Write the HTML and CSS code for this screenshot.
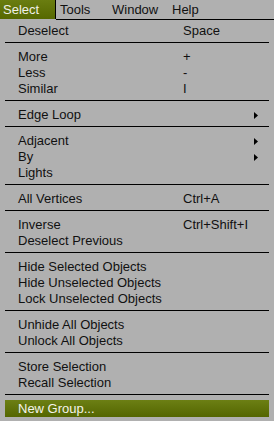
FILE: index.html
```html
<!DOCTYPE html>
<html>
<head>
<meta charset="utf-8">
<link rel="stylesheet" href="styles.css">
</head>
<body>
<div class="menubar">
  <div class="mb-active">Select</div>
  <div class="mb-rest">
    <span class="mb-tools">Tools</span>
    <span class="mb-window">Window</span>
    <span class="mb-help">Help</span>
  </div>
</div>
<div class="menu">
  <div class="item"><span>Deselect</span><span>Space</span></div>
  <div class="sep"></div>
  <div class="item"><span>More</span><span>+</span></div>
  <div class="item"><span>Less</span><span>-</span></div>
  <div class="item"><span>Similar</span><span>I</span></div>
  <div class="sep"></div>
  <div class="item"><span>Edge Loop</span><span></span><svg class="arrow" width="4" height="7" viewBox="0 0 4 7"><polygon points="0,0 4,3.5 0,7" fill="#000"/></svg></div>
  <div class="sep"></div>
  <div class="item"><span>Adjacent</span><span></span><svg class="arrow" width="4" height="7" viewBox="0 0 4 7"><polygon points="0,0 4,3.5 0,7" fill="#000"/></svg></div>
  <div class="item"><span>By</span><span></span><svg class="arrow" width="4" height="7" viewBox="0 0 4 7"><polygon points="0,0 4,3.5 0,7" fill="#000"/></svg></div>
  <div class="item"><span>Lights</span><span></span></div>
  <div class="sep"></div>
  <div class="item"><span>All Vertices</span><span>Ctrl+A</span></div>
  <div class="sep"></div>
  <div class="item"><span>Inverse</span><span>Ctrl+Shift+I</span></div>
  <div class="item"><span>Deselect Previous</span><span></span></div>
  <div class="sep"></div>
  <div class="item"><span>Hide Selected Objects</span><span></span></div>
  <div class="item"><span>Hide Unselected Objects</span><span></span></div>
  <div class="item"><span>Lock Unselected Objects</span><span></span></div>
  <div class="sep"></div>
  <div class="item"><span>Unhide All Objects</span><span></span></div>
  <div class="item"><span>Unlock All Objects</span><span></span></div>
  <div class="sep"></div>
  <div class="item"><span>Store Selection</span><span></span></div>
  <div class="item"><span>Recall Selection</span><span></span></div>
  <div class="sep"></div>
  <div class="item hl"><span>New Group...</span><span></span></div>
</div>
</body>
</html>
```

FILE: styles.css
```css
html, body {
  margin: 0;
  padding: 0;
  background: #b0b0b0;
  width: 274px;
  height: 421px;
  overflow: hidden;
  font-family: "Liberation Sans", Arial, sans-serif;
  font-size: 13px;
  color: #111;
}

.menubar {
  display: flex;
  height: 20px;
}

.mb-active {
  width: 52px;
  height: 19px;
  line-height: 19px;
  padding-left: 3px;
  background: linear-gradient(#6a7d10, #566800);
  border-right: 1px solid #000;
  color: #f0f0e8;
}

.mb-rest {
  flex: 1;
  display: flex;
  height: 19px;
  line-height: 19px;
  border-bottom: 1px solid #000;
}

.mb-tools {
  padding-left: 4px;
  width: 52px;
}

.mb-window {
  width: 60px;
}

.menu {
  padding-top: 3px;
}

.item {
  display: grid;
  grid-template-columns: 165px 1fr auto;
  align-items: center;
  height: 16px;
  line-height: 16px;
  margin: 0 5px;
  padding: 0 11px 0 13px;
  white-space: nowrap;
}

.arrow {
  display: block;
}

.sep {
  height: 1px;
  background: #000;
  margin: 3px 5px 6px;
}

.item.hl {
  margin-top: -1px;
  height: 17px;
  line-height: 17px;
  background: linear-gradient(#6c7f14, #546600);
  color: #f4f4ec;
}
```
